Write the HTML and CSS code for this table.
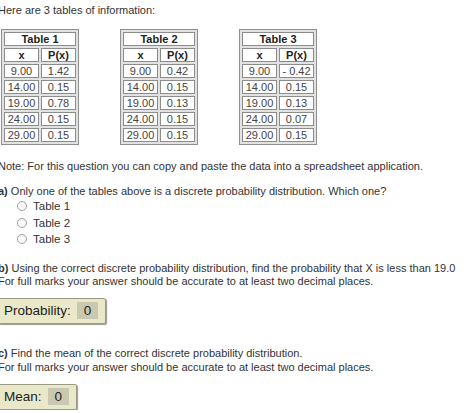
FILE: index.html
```html
<!DOCTYPE html>
<html>
<head>
<meta charset="utf-8">
<link rel="stylesheet" href="styles.css">
</head>
<body>
<div class="page">
  <p class="intro">Here are 3 tables of information:</p>
  <div class="tables">
    <table class="dt">
      <tr><th colspan="2">Table 1</th></tr>
      <tr><th>x</th><th>P(x)</th></tr>
      <tr><td>9.00</td><td>1.42</td></tr>
      <tr><td>14.00</td><td>0.15</td></tr>
      <tr><td>19.00</td><td>0.78</td></tr>
      <tr><td>24.00</td><td>0.15</td></tr>
      <tr><td>29.00</td><td>0.15</td></tr>
    </table>
    <table class="dt">
      <tr><th colspan="2">Table 2</th></tr>
      <tr><th>x</th><th>P(x)</th></tr>
      <tr><td>9.00</td><td>0.42</td></tr>
      <tr><td>14.00</td><td>0.15</td></tr>
      <tr><td>19.00</td><td>0.13</td></tr>
      <tr><td>24.00</td><td>0.15</td></tr>
      <tr><td>29.00</td><td>0.15</td></tr>
    </table>
    <table class="dt">
      <tr><th colspan="2">Table 3</th></tr>
      <tr><th>x</th><th>P(x)</th></tr>
      <tr><td>9.00</td><td>- 0.42</td></tr>
      <tr><td>14.00</td><td>0.15</td></tr>
      <tr><td>19.00</td><td>0.13</td></tr>
      <tr><td>24.00</td><td>0.07</td></tr>
      <tr><td>29.00</td><td>0.15</td></tr>
    </table>
  </div>
  <p class="note">Note: For this question you can copy and paste the data into a spreadsheet application.</p>

  <p class="q q-a"><b>a)</b> Only one of the tables above is a discrete probability distribution. Which one?</p>
  <ul class="opts">
    <li><span class="radio"></span>Table 1</li>
    <li><span class="radio"></span>Table 2</li>
    <li><span class="radio"></span>Table 3</li>
  </ul>

  <p class="q q-b"><b>b)</b> Using the correct discrete probability distribution, find the probability that X is less than 19.0<br>For full marks your answer should be accurate to at least two decimal places.</p>
  <div class="answer ans-b"><span class="label">Probability:</span><span class="field">0</span></div>

  <p class="q q-c"><b>c)</b> Find the mean of the correct discrete probability distribution.<br>For full marks your answer should be accurate to at least two decimal places.</p>
  <div class="answer ans-c"><span class="label">Mean:</span><span class="field">0</span></div>
</div>
</body>
</html>
```

FILE: styles.css
```css
html, body {
  margin: 0;
  padding: 0;
  background: #ffffff;
}
body {
  font-family: "Liberation Sans", Arial, sans-serif;
  font-size: 11px;
  color: #333333;
}
.page {
  margin-left: -2px;
  padding-top: 3px;
}
p { margin: 0; line-height: 14px; white-space: nowrap; }
.intro { margin-bottom: 12px; }

.tables {
  display: flex;
  gap: 41px;
  padding-left: 3px;
}
.dt {
  border: 1px solid #8f8f8f;
  border-collapse: separate;
  border-spacing: 2px;
  background: #e2e2e2;
  width: 78px;
  table-layout: fixed;
}
.dt th, .dt td {
  background: #ffffff;
  border: 1px solid #8c8c8c;
  padding: 0;
  height: 12px;
  line-height: 12px;
  text-align: center;
  font-size: 11px;
  white-space: nowrap;
}
.dt th { font-weight: bold; color: #222; }
.dt td { color: #444; }

.note { margin-top: 14px; }
.q-a { margin-top: 11px; }
.opts {
  list-style: none;
  margin: 0;
  padding: 0 0 0 19px;
}
.opts li {
  display: flex;
  align-items: center;
  height: 16.5px;
  font-size: 11.5px;
}
.radio {
  width: 10px;
  height: 10px;
  border: 1px solid #a0a0a0;
  border-radius: 50%;
  background: #fafafa;
  margin-right: 6px;
  box-sizing: border-box;
}
.q-b { margin-top: 14px; line-height: 13px; }
.q-c { margin-top: 22px; }
.answer {
  display: inline-flex;
  align-items: center;
  background: #e9e9c9;
  border: 1px solid #9b9b85;
  box-shadow: 1px 1px 1px #9a9a90;
  border-radius: 2px;
  height: 26px;
  box-sizing: border-box;
  padding: 0 7px 0 5px;
  font-size: 13.5px;
  color: #222;
}
.ans-b { margin-top: 10px; }
.ans-c { margin-top: 10px; }
.field {
  display: inline-block;
  background: #c9c9b1;
  padding: 0 7px;
  margin-left: 6px;
  line-height: 17px;
}
```
